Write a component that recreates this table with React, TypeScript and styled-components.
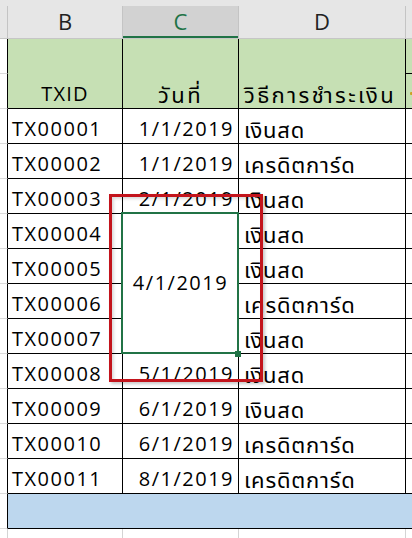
import React from "react";
import styled, { createGlobalStyle } from "styled-components";

const Global = createGlobalStyle`
  html, body { margin: 0; padding: 0; background: #ffffff; }
  body { width: 412px; height: 538px; overflow: hidden; }
`;

const FONT = `"Open Sans", "Noto Sans", "Noto Sans Thai", Loma, Tahoma, sans-serif`;

const Sheet = styled.div`
  position: relative;
  width: 412px;
  height: 538px;
  overflow: hidden;
  display: grid;
  grid-template-columns: 8px 115px 116px 167px 1fr;
  grid-template-rows: 39px 35px 35px repeat(11, 35px) 35px 1fr;
  font-family: ${FONT};
  color: #000;
  background: #fff;
`;

const ColHead = styled.div`
  box-sizing: border-box;
  background: #e6e6e6;
  padding-top: 6px;
  display: flex;
  border-bottom: 1px solid #c6c6c6;
`;

const ColFace = styled.div<{ $active?: boolean; $edge?: boolean }>`
  flex: 1;
  box-sizing: border-box;
  display: flex;
  align-items: center;
  justify-content: center;
  font-family: "Open Sans", "Noto Sans", sans-serif;
  font-size: 22px;
  padding-bottom: 3px;
  color: ${(p) => (p.$active ? "#217346" : "#222")};
  background: ${(p) => (p.$active ? "#d2d2d2" : "#e6e6e6")};
  border-right: ${(p) => (p.$edge ? "none" : "1px solid #c4c4c4")};
  box-shadow: ${(p) => (p.$active ? "inset 0 -2px 0 #217346" : "none")};
`;

const Gutter = styled.div<{ $table?: boolean }>`
  box-sizing: border-box;
  background: #fff;
  border-bottom: 1px solid #dadada;
  border-right: 1px solid ${(p) => (p.$table ? "#000" : "#d4d4d4")};
`;

const HeadCell = styled.div<{ $align?: "left" | "center"; $thai?: boolean }>`
  grid-row: span 2;
  box-sizing: border-box;
  background: #c6e0b4;
  border-right: 1px solid #000;
  border-bottom: 1px solid #000;
  display: flex;
  align-items: flex-end;
  justify-content: ${(p) => (p.$align === "left" ? "flex-start" : "center")};
  padding: 0 5px 4px 5px;
  font-size: ${(p) => (p.$thai ? "22px" : "20px")};
  line-height: 20px;
  letter-spacing: ${(p) => (p.$thai ? "2.4px" : "1.2px")};
  white-space: nowrap;
`;

const HeadStub = styled.div`
  position: relative;
  box-sizing: border-box;
  background: #c6e0b4;
  border-bottom: 1px solid #000;
`;

const GoldTick = styled.span`
  position: absolute;
  left: 4px;
  top: 18px;
  width: 3px;
  height: 3px;
  border-radius: 1px;
  background: #c9a227;
`;

const Cell = styled.div<{ $align?: "left" | "right" | "center" }>`
  box-sizing: border-box;
  border-right: 1px solid #000;
  border-bottom: 1px solid #000;
  display: flex;
  align-items: flex-end;
  justify-content: ${(p) =>
    p.$align === "right" ? "flex-end" : p.$align === "center" ? "center" : "flex-start"};
  padding: 0 5px 4px 4px;
  font-size: 20px;
  line-height: 20px;
  letter-spacing: 1.5px;
  white-space: nowrap;
  overflow: visible;
`;

const IdCell = styled(Cell)`
  padding-left: 4px;
`;

const DateCell = styled(Cell)`
  padding-right: 4px;
`;

const PayCell = styled(Cell)`
  padding-left: 5px;
  font-size: 22px;
  letter-spacing: 0.8px;
`;

const EdgeCell = styled.div`
  box-sizing: border-box;
  border-bottom: 1px solid #000;
`;

const MergedCell = styled.div`
  grid-row: span 4;
  position: relative;
  z-index: 2;
  box-sizing: border-box;
  border-right: 1px solid #000;
  border-bottom: 1px solid #000;
  display: flex;
  align-items: center;
  justify-content: center;
  font-size: 20px;
  line-height: 20px;
  letter-spacing: 1.5px;
  padding-bottom: 2px;

  &::after {
    content: "";
    position: absolute;
    top: -2px;
    left: -2px;
    right: -1px;
    bottom: -1px;
    border: 2px solid #217346;
    pointer-events: none;
  }
  &::before {
    content: "";
    position: absolute;
    right: -3px;
    bottom: -4px;
    width: 6px;
    height: 6px;
    background: #217346;
    box-sizing: border-box;
    z-index: 3;
  }
`;

const TotalBand = styled.div`
  grid-column: span 4;
  box-sizing: border-box;
  background: #bdd7ee;
  border-bottom: 1px solid #000;
`;

const Blank = styled.div<{ $edge?: boolean }>`
  box-sizing: border-box;
  border-right: ${(p) => (p.$edge ? "none" : "1px solid #d4d4d4")};
`;

const Annotation = styled.div`
  position: absolute;
  left: 109px;
  top: 194px;
  width: 154px;
  height: 188px;
  box-sizing: border-box;
  border: 3px solid #c3141c;
  box-shadow: 2px 2px 3px rgba(0, 0, 0, 0.22), inset 2px 2px 3px rgba(0, 0, 0, 0.14);
  z-index: 5;
  pointer-events: none;
`;

type Row = { id: string; date?: string; pay: string; merged?: boolean };

const rows: Row[] = [
  { id: "TX00001", date: "1/1/2019", pay: "เงินสด" },
  { id: "TX00002", date: "1/1/2019", pay: "เครดิตการ์ด" },
  { id: "TX00003", date: "2/1/2019", pay: "เงินสด" },
  { id: "TX00004", date: "4/1/2019", pay: "เงินสด", merged: true },
  { id: "TX00005", pay: "เงินสด" },
  { id: "TX00006", pay: "เครดิตการ์ด" },
  { id: "TX00007", pay: "เงินสด" },
  { id: "TX00008", date: "5/1/2019", pay: "เงินสด" },
  { id: "TX00009", date: "6/1/2019", pay: "เงินสด" },
  { id: "TX00010", date: "6/1/2019", pay: "เครดิตการ์ด" },
  { id: "TX00011", date: "8/1/2019", pay: "เครดิตการ์ด" },
];

export default function App() {
  return (
    <>
      <Global />
      <Sheet>
        <ColHead>
          <ColFace />
        </ColHead>
        <ColHead>
          <ColFace>B</ColFace>
        </ColHead>
        <ColHead>
          <ColFace $active>C</ColFace>
        </ColHead>
        <ColHead>
          <ColFace>D</ColFace>
        </ColHead>
        <ColHead>
          <ColFace $edge />
        </ColHead>

        <Gutter $table />
        <HeadCell $align="center">TXID</HeadCell>
        <HeadCell $align="center" $thai>วันที่</HeadCell>
        <HeadCell $align="left" $thai>วิธีการชำระเงิน</HeadCell>
        <HeadStub />
        <Gutter $table />
        <HeadStub>
          <GoldTick />
        </HeadStub>

        {rows.map((r) => (
          <React.Fragment key={r.id}>
            <Gutter $table />
            <IdCell>{r.id}</IdCell>
            {r.merged ? (
              <MergedCell>{r.date}</MergedCell>
            ) : r.date ? (
              <DateCell $align="right">{r.date}</DateCell>
            ) : null}
            <PayCell>{r.pay}</PayCell>
            <EdgeCell />
          </React.Fragment>
        ))}

        <Gutter $table />
        <TotalBand />

        <Blank />
        <Blank />
        <Blank />
        <Blank />
        <Blank $edge />

        <Annotation />
      </Sheet>
    </>
  );
}
